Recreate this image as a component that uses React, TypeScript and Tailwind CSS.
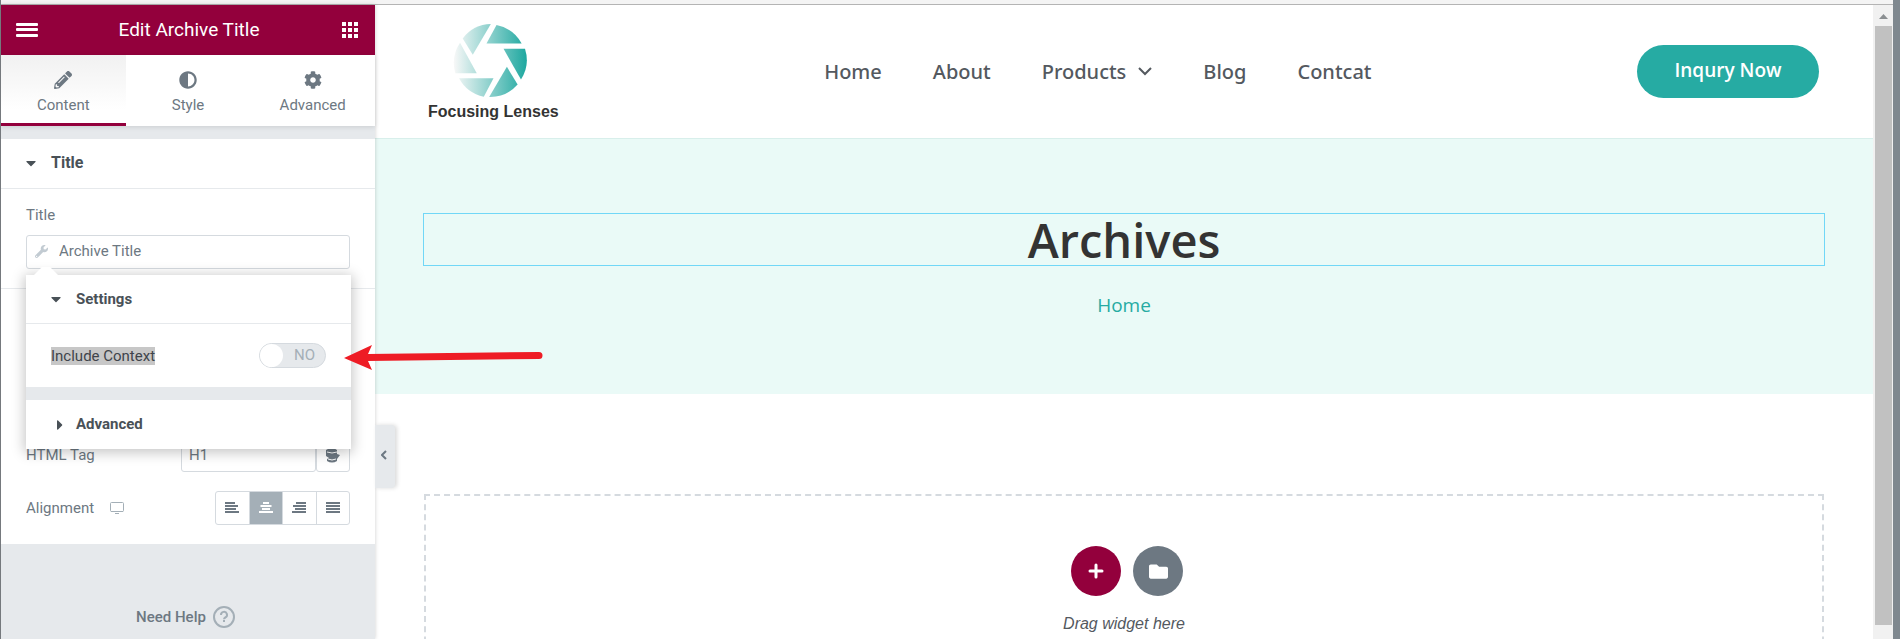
import { useState } from "react";
import {
  FaAdjust,
  FaCaretDown,
  FaCaretRight,
  FaCog,
  FaFolder,
  FaPencilAlt,
  FaWrench,
} from "react-icons/fa";

const tabs = [
  { name: "Content", icon: FaPencilAlt },
  { name: "Style", icon: FaAdjust },
  { name: "Advanced", icon: FaCog },
];

const navLinks = ["Home", "About", "Products", "Blog", "Contcat"];

function LinesIcon({ widths, anchor }: { widths: number[]; anchor: "left" | "center" | "right" }) {
  return (
    <svg width="14" height="12" viewBox="0 0 14 12" fill="currentColor" aria-hidden="true">
      {widths.map((w, i) => {
        const x = anchor === "left" ? 0 : anchor === "right" ? 14 - w : (14 - w) / 2;
        return <rect key={i} x={x} y={i * 3} width={w} height="2" />;
      })}
    </svg>
  );
}

const alignments = [
  { name: "Left", icon: <LinesIcon widths={[10, 13, 11, 14]} anchor="left" /> },
  { name: "Center", icon: <LinesIcon widths={[6, 11, 8, 14]} anchor="center" /> },
  { name: "Right", icon: <LinesIcon widths={[10, 13, 11, 14]} anchor="right" /> },
  { name: "Justified", icon: <LinesIcon widths={[14, 14, 14, 14]} anchor="left" /> },
];

function Logo() {
  return (
    <a href="#" className="flex flex-col items-center gap-0.5 pt-1">
      <svg className="mr-1.5" width="75" height="75" viewBox="160 72 224 224" aria-hidden="true">
        <defs>
          <linearGradient id="lens" gradientUnits="userSpaceOnUse" x1="162" y1="0" x2="382" y2="0">
            <stop offset="0" stopColor="#f8f8f8" />
            <stop offset="1" stopColor="#1ca79f" />
          </linearGradient>
        </defs>
        <g fill="url(#lens)">
          <path d="M290 78A109 109 0 0 1 365 133H260Z" />
          <path d="M375 149A109 109 0 0 1 363 241L311 149Z" />
          <path d="M353 256A109 109 0 0 1 268 293L321 203Z" />
          <path d="M252 292A109 109 0 0 1 178 237H281Z" />
          <path d="M167 222A109 109 0 0 1 181 131L231 222Z" />
          <path d="M189 118A109 109 0 0 1 273 75L219 167Z" />
        </g>
      </svg>
      <span className="font-['Liberation_Sans',sans-serif] text-base font-bold text-[#333]">
        Focusing Lenses
      </span>
    </a>
  );
}

function SettingsPopover() {
  const [context, setContext] = useState(false);

  return (
    <div className="absolute inset-x-0 top-full z-10 -mr-px mt-1.5 bg-white shadow-[0_2px_12px_2px_rgba(0,0,0,0.22)]">
      <svg className="absolute -top-2 left-2" width="24" height="8" viewBox="0 0 24 8" aria-hidden="true">
        <path d="M12 -4L24 8H0Z" fill="#fff" />
      </svg>
      <button className="flex h-[49px] w-full items-center gap-3 border-b border-[#e6e9ec] px-[22px] text-[15px] font-bold text-[#495157]">
        <FaCaretDown size={16} />
        Settings
      </button>
      <div className="flex h-[63px] items-center justify-between px-[25px]">
        <label htmlFor="context" className="bg-[#c7c7c7] leading-[18px] text-[#3f444b]">
          Include Context
        </label>
        <span className="relative flex h-[25px] w-[67px] items-center justify-end rounded-full border border-[#d5dadf] bg-[#e6e9ec] pr-2.5 text-[15px] text-[#a4afb7]">
          <input
            id="context"
            type="checkbox"
            checked={context}
            onChange={(e) => setContext(e.target.checked)}
            className="absolute inset-0 size-full appearance-none"
          />
          <span className="pointer-events-none absolute left-0 size-[23px] rounded-full bg-white" />
          {context ? "YES" : "NO"}
        </span>
      </div>
      <div className="h-[13px] bg-[#e6e9ec]" />
      <button className="flex h-[49px] w-full items-center gap-2 px-[26px] text-[15px] font-bold text-[#495157]">
        <FaCaretRight size={16} />
        Advanced
      </button>
    </div>
  );
}

function Panel() {
  const [tab, setTab] = useState("Content");
  const [align, setAlign] = useState("Center");

  return (
    <aside className="relative z-10 flex w-[374px] shrink-0 flex-col bg-[#e6e9ec] text-[15px] text-[#6d7882] shadow-[0_0_4px_rgba(0,0,0,0.2)]">
      <header className="flex h-[50px] shrink-0 items-center justify-between bg-[#93003c] pl-[15px] pr-[17px] text-white">
        <button aria-label="Menu">
          <svg width="22" height="16" viewBox="0 0 22 16" fill="currentColor">
            <rect y="1" width="22" height="3" rx="1" />
            <rect y="6" width="22" height="3" rx="1" />
            <rect y="12" width="22" height="3" rx="1" />
          </svg>
        </button>
        <h1 className="pr-0.5 text-[19px]">Edit Archive Title</h1>
        <button aria-label="Widgets">
          <svg width="16" height="16" viewBox="0 0 16 16" fill="currentColor">
            {[0, 6, 12].map((y) =>
              [0, 6, 12].map((x) => <rect key={x + "-" + y} x={x} y={y} width="4" height="4" />)
            )}
          </svg>
        </button>
      </header>

      <nav className="z-10 grid h-[71px] shrink-0 grid-cols-3 bg-white shadow-[0_1px_5px_rgba(0,0,0,0.12)]">
        {tabs.map((t) => (
          <button
            key={t.name}
            onClick={() => setTab(t.name)}
            className={
              tab === t.name
                ? "flex flex-col items-center border-b-3 border-[#93003c] bg-linear-to-b from-[#f1f1f1] to-white to-80% pt-4"
                : "flex flex-col items-center border-b-3 border-transparent pt-4"
            }
          >
            <t.icon size={18} />
            <span className="mt-1 leading-6">{t.name}</span>
          </button>
        ))}
      </nav>

      <button className="mt-[13px] flex h-[50px] shrink-0 items-center gap-3 border-b border-[#e6e9ec] bg-white px-[22px] pb-0.5 text-base font-bold text-[#495157]">
        <FaCaretDown size={16} />
        Title
      </button>

      <section className="bg-white px-[25px] pb-[19px] pt-3.5">
        <label htmlFor="title" className="block leading-6">Title</label>
        <div className="relative mt-2">
          <FaWrench size={13} className="absolute left-[9px] top-2.5 text-[#c2cbd2]" />
          <input
            id="title"
            defaultValue="Archive Title"
            className="h-[34px] w-full rounded-[3px] border border-[#d5dadf] pb-0.5 pl-8"
          />
          <SettingsPopover />
        </div>
      </section>

      <section className="flex flex-col gap-[19px] border-t border-[#e6e9ec] bg-white px-[25px] pb-[19px] pt-[149px]">
        <div className="flex h-[34px] items-center">
          <label htmlFor="tag" className="flex-1">HTML Tag</label>
          <select
            id="tag"
            defaultValue="H1"
            className="h-full w-[135px] appearance-none rounded-[3px] border border-[#d5dadf] px-[7px]"
          >
            <option>H1</option>
            <option>H2</option>
            <option>H3</option>
          </select>
          <button
            aria-label="Global style"
            className="flex h-full w-[34px] items-center justify-center rounded-[3px] border border-[#d5dadf]"
          >
            <svg width="14" height="16" viewBox="0 0 14 16" fill="currentColor" aria-hidden="true">
              <path d="M0 3Q6 -1 11 3V7L14 8L11 12V14Q6 17 1 14V12L3 11L0 9Z" />
              <path d="M1 5Q6 7 11 5M2 12Q6 14 10 12" fill="none" stroke="#fff" />
            </svg>
          </button>
        </div>

        <div className="flex h-[34px] items-center justify-between">
          <div className="flex items-center gap-4">
            <span>Alignment</span>
            <svg width="14" height="12" viewBox="0 0 14 12" aria-hidden="true">
              <rect x="0.5" y="0.5" width="13" height="9" rx="1" fill="none" stroke="#a4afb7" />
              <path d="M1 9.5H13M5 11.5H9" stroke="#a4afb7" />
            </svg>
          </div>
          <div className="flex h-full w-[135px] divide-x divide-[#d5dadf] overflow-hidden rounded-[3px] border border-[#d5dadf]">
            {alignments.map((a) => (
              <button
                key={a.name}
                aria-label={a.name}
                onClick={() => setAlign(a.name)}
                className={
                  align === a.name
                    ? "flex flex-1 items-center justify-center bg-[#a4afb7] text-white"
                    : "flex flex-1 items-center justify-center"
                }
              >
                {a.icon}
              </button>
            ))}
          </div>
        </div>
      </section>

      <a href="#" className="mt-[62px] flex items-center justify-center gap-[7px] pr-[5px] font-medium">
        Need Help
        <svg width="22" height="22" viewBox="0 0 22 22" aria-hidden="true">
          <circle cx="11" cy="11" r="10" fill="none" stroke="#a4afb7" strokeWidth="2" />
          <path d="M8 9a3 3 0 1 1 4.300 2.500q-1.300.700-1.300 1.700" fill="none" stroke="#a4afb7" strokeWidth="2" />
          <rect x="10" y="14" width="2" height="2" fill="#a4afb7" />
        </svg>
      </a>

      <button
        aria-label="Collapse panel"
        className="absolute left-full top-[420px] flex h-[63px] w-5 items-center justify-center rounded-r-[4px] bg-[#e6e9ec] pb-1 pr-0.5 shadow-[2px_0_4px_rgba(0,0,0,0.15)]"
      >
        <svg width="6" height="10" viewBox="0 0 6 10" fill="none" stroke="#6d7882" strokeWidth="2">
          <path d="M5 1L1 5L5 9" />
        </svg>
      </button>
    </aside>
  );
}

function Preview() {
  return (
    <main className="min-w-0 flex-1 bg-white">
      <header className="flex h-[133px] items-center justify-between pl-[53px] pr-[54px]">
        <Logo />
        <nav className="flex gap-[51px] font-['Noto_Sans',sans-serif] text-xl font-medium text-[#54595f]">
          {navLinks.map((l) => (
            <a key={l} href="#" className="flex items-center gap-3">
              {l}
              {l === "Products" && (
                <svg width="14" height="10" viewBox="0 0 14 10" fill="none" stroke="currentColor" strokeWidth="2">
                  <path d="M1 1L7 7L13 1" />
                </svg>
              )}
            </a>
          ))}
        </nav>
        <button className="h-[53px] w-[182px] rounded-full bg-[#26aba3] pb-0.5 font-['Open_Sans',sans-serif] text-[19px] font-semibold text-white">
          Inqury Now
        </button>
      </header>

      <section className="h-[256px] border-t border-[#d8efeb] bg-[#eafaf7] px-12 pt-[74px] text-center font-['Open_Sans',sans-serif]">
        <h2 className="border border-[#71d7f7] pt-0.5 text-[47px] font-semibold leading-[49px] text-[#333]">Archives</h2>
        <a href="#" className="mt-[25px] inline-block text-[19px] text-[#26aba3]">Home</a>
      </section>

      <section className="mx-[49px] mt-[100px] flex h-[240px] flex-col items-center border-2 border-dashed border-[#d5dadf] pt-[50px]">
        <div className="flex gap-3 pl-1.5 text-white">
          <button aria-label="Add section" className="flex size-[50px] items-center justify-center rounded-full bg-[#93003c]">
            <svg width="16" height="16" viewBox="0 0 16 16" stroke="currentColor" strokeWidth="3" strokeLinecap="round">
              <path d="M2 8H14M8 2V14" />
            </svg>
          </button>
          <button aria-label="Add template" className="flex size-[50px] items-center justify-center rounded-full bg-[#6d7882]">
            <FaFolder size={19} />
          </button>
        </div>
        <p className="mt-4 font-['Liberation_Sans',sans-serif] text-base italic text-[#54595f]">Drag widget here</p>
      </section>
    </main>
  );
}

export default function App() {
  return (
    <div className="relative flex h-screen flex-col overflow-hidden border-l border-[#75797d] bg-[#f4f4f4] font-[Roboto,sans-serif]">
      <div className="flex min-h-0 flex-1">
        <div className="flex min-w-0 flex-1 flex-col">
          <div className="h-[5px] shrink-0 border-b border-[#b4b4b4]" />
          <div className="flex min-h-0 flex-1">
            <Panel />
            <Preview />
            <div className="flex w-5 shrink-0 flex-col items-center bg-[#f1f1f1] pb-3.5">
              <svg width="20" height="21" viewBox="0 0 20 21" fill="#8b8f92" aria-hidden="true">
                <path d="M6 14L10.500 9L15 14Z" />
              </svg>
              <div className="w-[17px] flex-1 bg-[#c1c1c1]" />
            </div>
          </div>
        </div>
        <div className="w-[7px] shrink-0 bg-[#7f888f]" />
      </div>

      {/* callout pointing at the switch */}
      <svg
        className="pointer-events-none absolute left-[342px] top-[344px] z-20"
        width="202"
        height="28"
        viewBox="0 0 202 28"
        fill="#ee1c25"
        aria-hidden="true"
      >
        <path d="M1 14L29 1L25 10L196 8A3.500 3.500 0 0 1 196 15L25 17L29 26Z" />
      </svg>
    </div>
  );
}
